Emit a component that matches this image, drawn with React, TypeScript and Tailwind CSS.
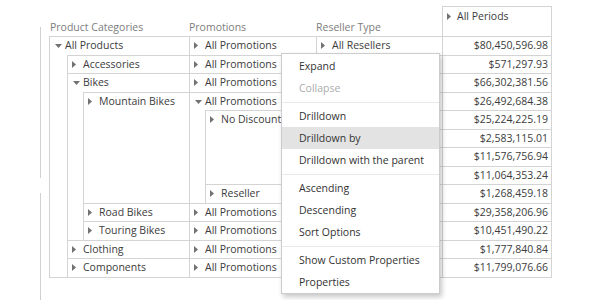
import React from "react";

const Right = () => (
  <svg width="4" height="7" viewBox="0 0 4 7" className="shrink-0 ml-[4px] mr-[7px]">
    <polygon points="0,0 4,3.5 0,7" fill="#727272" />
  </svg>
);
const Down = () => (
  <svg width="7" height="4" viewBox="0 0 7 4" className="shrink-0 ml-[5px] mr-[3px] mt-[1px]">
    <polygon points="0,0 7,0 3.5,4" fill="#727272" />
  </svg>
);

type CellProps = { cls: string; children?: React.ReactNode; arrow?: "r" | "d" };
const Cell = ({ cls, children, arrow }: CellProps) => (
  <div className={`border-l border-t border-[#d4d4d4] overflow-hidden ${cls}`}>
    <div className="h-[17.5px] flex items-center whitespace-nowrap">
      {arrow === "r" && <Right />}
      {arrow === "d" && <Down />}
      {children && <span>{children}</span>}
    </div>
  </div>
);
const Indent = ({ cls }: { cls: string }) => <div className={`border-l border-[#d4d4d4] ${cls}`} />;

const values = [
  "$80,450,596.98",
  "$571,297.93",
  "$66,302,381.56",
  "$26,492,684.38",
  "$25,224,225.19",
  "$2,583,115.01",
  "$11,576,756.94",
  "$11,064,353.24",
  "$1,268,459.18",
  "$29,358,206.96",
  "$10,451,490.22",
  "$1,777,840.84",
  "$11,799,076.66",
];

const rowStart = [
  "row-start-1",
  "row-start-2",
  "row-start-3",
  "row-start-4",
  "row-start-5",
  "row-start-6",
  "row-start-7",
  "row-start-8",
  "row-start-9",
  "row-start-10",
  "row-start-11",
  "row-start-12",
  "row-start-13",
];

const MenuItem = ({ children, disabled, active }: { children: React.ReactNode; disabled?: boolean; active?: boolean }) => (
  <div
    className={`h-[22px] flex items-center pl-[17px] whitespace-nowrap ${disabled ? "text-[#ababab]" : "text-[#333333]"} ${
      active ? "bg-[#e3e3e3]" : ""
    }`}
  >
    {children}
  </div>
);
const Sep = () => (
  <div className="h-[6px] flex items-center">
    <div className="h-px w-full bg-[#e9e9e9]" />
  </div>
);

export default function App() {
  const cols = "grid grid-cols-[18px_16px_106px_16px_111px_126px_110px]";
  return (
    <div className="relative w-[600px] h-[300px] bg-white overflow-hidden font-['Open_Sans',sans-serif] text-[10.5px] leading-[15px] text-[#3c3c3c] flex">
      <div className="ml-[40px] w-px flex flex-col">
        <div className="h-[27px]" />
        <div className="h-[151px] bg-[#d0d0d0]" />
        <div className="h-[15px]" />
        <div className="flex-1 bg-[#d0d0d0]" />
      </div>
      <div className="ml-[8px] pt-[6px]">
        {/* header */}
        <div className={`${cols} h-[30px]`}>
          <div className="col-start-1 col-span-3 flex items-end pb-[1px] pl-px text-[#7d7d7d]">Product Categories</div>
          <div className="col-start-4 col-span-2 flex items-end pb-[1px] text-[#7d7d7d]">Promotions</div>
          <div className="col-start-6 flex items-end pb-[1px] text-[#7d7d7d]">Reseller Type</div>
          <div className="col-start-7 border-l border-t border-r border-[#d4d4d4] pt-[2px]">
            <div className="flex items-center h-[15px]">
              <Right />
              <span className="-ml-[1px]">All Periods</span>
            </div>
          </div>
        </div>
        {/* body */}
        <div className={`${cols} grid-rows-[repeat(13,18.5px)] border-b border-[#d4d4d4]`}>
          {/* product categories */}
          <Cell cls="col-start-1 col-span-3 row-start-1" arrow="d">All Products</Cell>
          <Indent cls="col-start-1 row-start-2 row-span-12" />
          <Cell cls="col-start-2 col-span-2 row-start-2" arrow="r">Accessories</Cell>
          <Cell cls="col-start-2 col-span-2 row-start-3" arrow="d">Bikes</Cell>
          <Indent cls="col-start-2 row-start-4 row-span-8" />
          <Cell cls="col-start-3 row-start-4 row-span-6" arrow="r">Mountain Bikes</Cell>
          <Cell cls="col-start-3 row-start-10" arrow="r">Road Bikes</Cell>
          <Cell cls="col-start-3 row-start-11" arrow="r">Touring Bikes</Cell>
          <Cell cls="col-start-2 col-span-2 row-start-12" arrow="r">Clothing</Cell>
          <Cell cls="col-start-2 col-span-2 row-start-13" arrow="r">Components</Cell>

          {/* promotions */}
          <Cell cls="col-start-4 col-span-2 row-start-1" arrow="r">All Promotions</Cell>
          <Cell cls="col-start-4 col-span-2 row-start-2" arrow="r">All Promotions</Cell>
          <Cell cls="col-start-4 col-span-2 row-start-3" arrow="r">All Promotions</Cell>
          <Cell cls="col-start-4 col-span-2 row-start-4" arrow="d">All Promotions</Cell>
          <Indent cls="col-start-4 row-start-5 row-span-5" />
          <Cell cls="col-start-5 row-start-5 row-span-4" arrow="r">No Discount</Cell>
          <Cell cls="col-start-5 row-start-9" arrow="r">Reseller</Cell>
          <Cell cls="col-start-4 col-span-2 row-start-10" arrow="r">All Promotions</Cell>
          <Cell cls="col-start-4 col-span-2 row-start-11" arrow="r">All Promotions</Cell>
          <Cell cls="col-start-4 col-span-2 row-start-12" arrow="r">All Promotions</Cell>
          <Cell cls="col-start-4 col-span-2 row-start-13" arrow="r">All Promotions</Cell>

          {/* reseller type */}
          <Cell cls="col-start-6 row-start-1" arrow="r">All Resellers</Cell>
          {rowStart.slice(1).map((r, i) => (
            <Cell key={"rs" + i} cls={`col-start-6 ${r}`} />
          ))}

          {/* values */}
          {values.map((v, i) => (
            <div
              key={"v" + i}
              className={`col-start-7 ${rowStart[i]} border-l border-t border-r border-[#d4d4d4] flex items-center justify-end pr-[3px] whitespace-nowrap`}
            >
              {v}
            </div>
          ))}
        </div>
      </div>

      {/* context menu */}
      <div className="absolute left-[281px] top-[53px] w-[159px] bg-white border border-[#cccccc] shadow-[2px_3px_5px_rgba(0,0,0,0.22)] pt-[1px]">
        <MenuItem>Expand</MenuItem>
        <MenuItem disabled>Collapse</MenuItem>
        <Sep />
        <MenuItem>Drilldown</MenuItem>
        <MenuItem active>Drilldown by</MenuItem>
        <MenuItem>Drilldown with the parent</MenuItem>
        <Sep />
        <MenuItem>Ascending</MenuItem>
        <MenuItem>Descending</MenuItem>
        <MenuItem>Sort Options</MenuItem>
        <Sep />
        <MenuItem>Show Custom Properties</MenuItem>
        <MenuItem>Properties</MenuItem>
      </div>
    </div>
  );
}
